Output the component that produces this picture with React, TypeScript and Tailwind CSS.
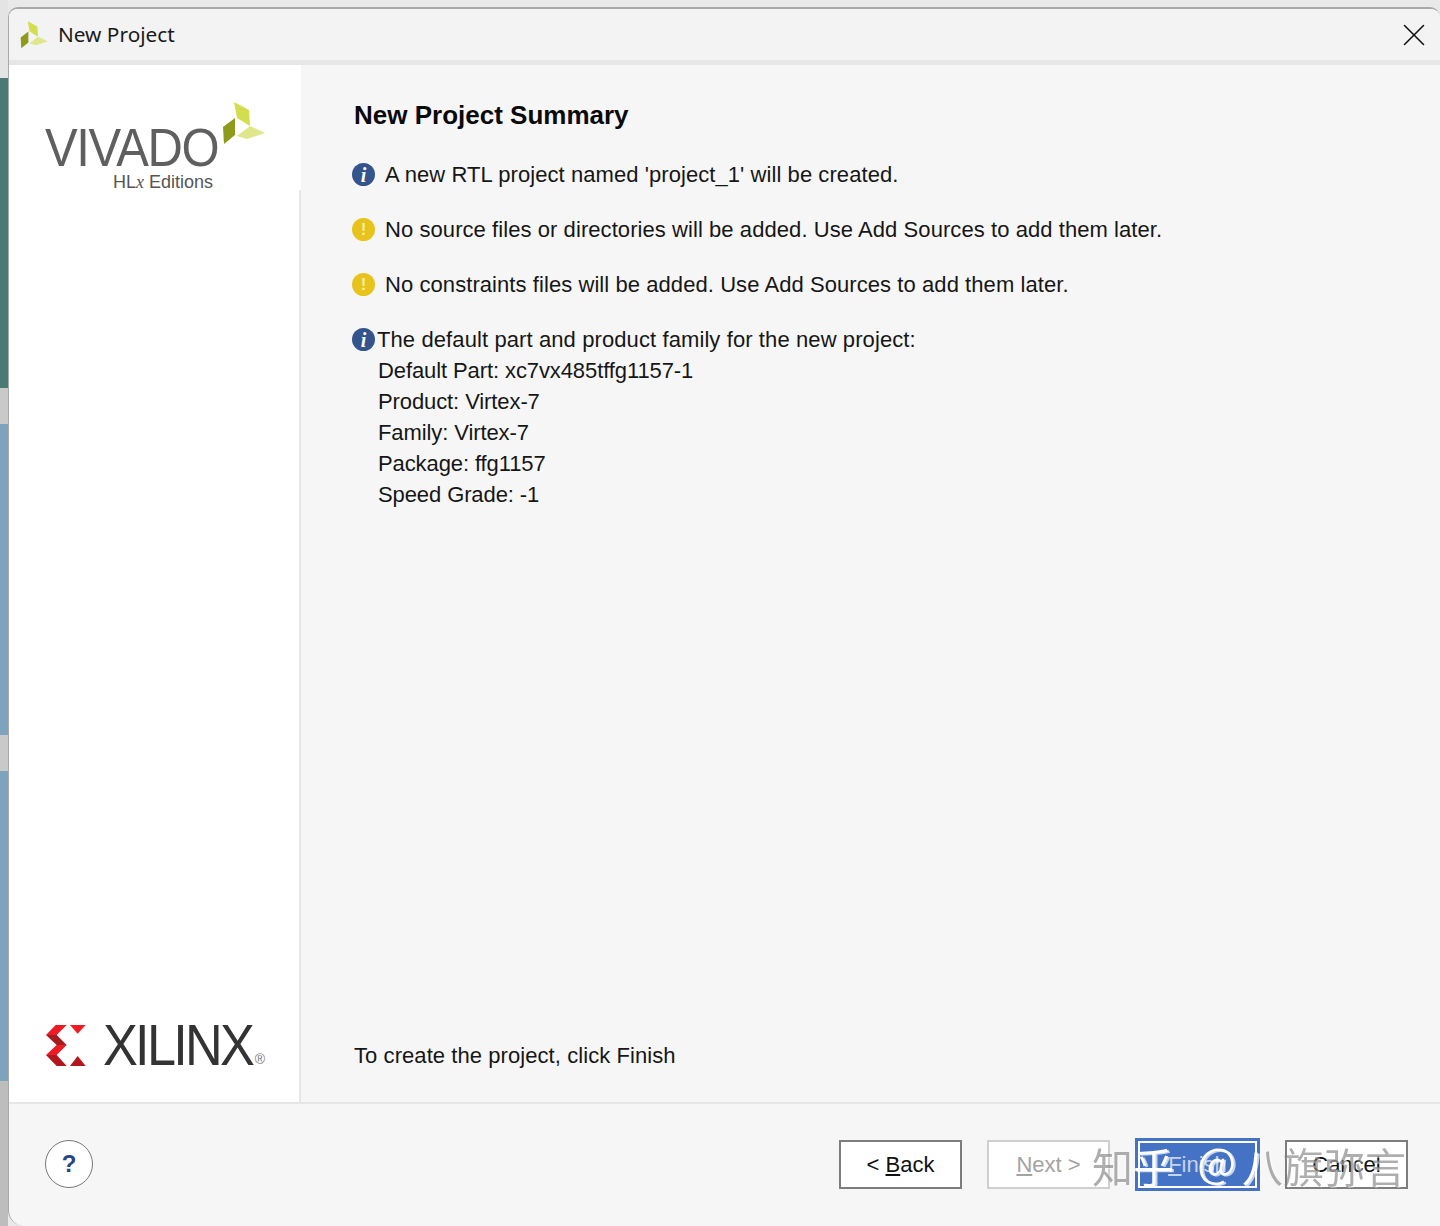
import { X } from 'lucide-react';

const FONT = "font-['Liberation_Sans',Arial,sans-serif]";

function InfoIcon() {
    return (
        <span className="flex h-[23px] w-[23px] shrink-0 items-center justify-center rounded-full bg-[#34548c] font-['Liberation_Serif',serif] text-[20px] font-bold italic leading-none text-white">
            i
        </span>
    );
}

function WarnIcon() {
    return (
        <span className="flex h-[23px] w-[23px] shrink-0 items-center justify-center rounded-full bg-[#e8c31c] text-[17px] font-bold leading-none text-[#f7ee9c]">
            !
        </span>
    );
}

function VivadoMark({ className }: { className: string }) {
    return (
        <svg viewBox="220 100 45 45" className={className}>
            <polygon points="232,102 247,110 248,126 235,118" fill="#d3de4f" />
            <polygon points="221,127 233,118 233,135 222,144" fill="#8d9a1c" />
            <polygon points="235,136 248,126 263,133 245,139" fill="#dfe78a" />
        </svg>
    );
}

function XilinxMark() {
    return (
        <svg viewBox="33 42 120 123" className="h-[41px] w-[40px] shrink-0">
            <polygon points="33,72 62,42 95,42 65,72" fill="#ed1c24" />
            <polygon points="33,72 65,72 95,102 65,102" fill="#a51c20" />
            <polygon points="65,102 95,102 65,132 33,132" fill="#ed1c24" />
            <polygon points="33,132 65,132 95,165 65,165" fill="#b3171d" />
            <polygon points="105,42 152,42 128,68" fill="#ed1c24" />
            <polygon points="128,135 152,165 105,165" fill="#b3171d" />
        </svg>
    );
}

function Message({ warn, children }: { warn?: boolean; children: string }) {
    return (
        <div className="flex h-[23px] items-center gap-[10px]">
            {warn ? <WarnIcon /> : <InfoIcon />}
            <span>{children}</span>
        </div>
    );
}

function DialogButton({ className, children }: { className: string; children: React.ReactNode }) {
    return (
        <div className={`flex h-[49px] w-[123px] items-center justify-center border-2 text-[22px] ${className}`}>
            {children}
        </div>
    );
}

export default function App() {
    return (
        <div className={`relative flex h-[1226px] w-[1440px] overflow-hidden bg-[#e9e9e9] text-[#111] ${FONT}`}>
            {/* Desktop showing behind the window */}
            <div className="flex w-[8px] shrink-0 flex-col bg-[#bdbdbd]">
                <div className="h-[78px] bg-[#e4e4e4]" />
                <div className="h-[310px] bg-[#4b7a74]" />
                <div className="h-[36px] bg-[#c9c9c9]" />
                <div className="h-[311px] bg-[#7da4bc]" />
                <div className="h-[36px] bg-[#c9c9c9]" />
                <div className="h-[310px] bg-[#7da4bc]" />
            </div>

            <div className="mt-[7px] flex flex-1 flex-col overflow-hidden rounded-t-[10px] rounded-bl-[16px] border-t-2 border-l border-[#a9a9a9] bg-[#f6f6f6]">
                {/* Title bar */}
                <div className="flex h-[56px] shrink-0 items-center justify-between border-b-[5px] border-[#e6e6e6] bg-[#f3f3f3] pr-[7px] pl-[11px]">
                    <div className="flex items-center gap-[9px]">
                        <VivadoMark className="h-[29px] w-[29px]" />
                        <span className="font-['Noto_Sans',sans-serif] text-[20.8px] leading-none text-[#1a1a1a]">New Project</span>
                    </div>
                    <X className="-my-2 h-[38px] w-[38px] text-[#111]" strokeWidth={1} />
                </div>

                <div className="flex min-h-0 flex-1">
                    {/* Brand column */}
                    <div className="flex w-[292px] shrink-0 flex-col justify-between border-r-2 border-[#e6e6e6] bg-white pb-[36px]">
                        <div className="relative -mr-[2px] flex h-[125px] items-start bg-white pt-[35px] pl-[36px]">
                            <div className="flex flex-col items-end">
                                <span className="mt-[20px] origin-left scale-x-[0.907] text-[54px] leading-[54px] tracking-[-1.5px] text-[#5f5f5f]">VIVADO</span>
                                <span className="mt-[-3px] mr-[23px] text-[18px] leading-[22px] text-[#555]">
                                    HL<span className="font-['Liberation_Serif',serif] italic">x</span> Editions
                                </span>
                            </div>
                            <VivadoMark className="-ml-[14px] h-[45px] w-[45px]" />
                        </div>
                        <div className="flex items-end pl-[37px]">
                            <XilinxMark />
                            <span className="ml-[17px] origin-left scale-x-[0.9] text-[58px] leading-[42px] tracking-[-3px] whitespace-nowrap text-[#333]">XILINX</span>
                            <span className="-ml-[14px] text-[14px] leading-[13px] text-[#777]">®</span>
                        </div>
                    </div>

                    {/* Summary */}
                    <div className="flex flex-1 flex-col justify-between pt-[35px] pb-[33px] pl-[51px] text-[22px] tracking-[0.07px] text-[#161616]">
                        <div>
                            <h1 className="ml-[2px] text-[26px] leading-[30px] font-bold tracking-normal text-[#0a0a0a]">New Project Summary</h1>
                            <div className="mt-[33px] flex flex-col gap-[32px]">
                                <Message>A new RTL project named 'project_1' will be created.</Message>
                                <Message warn>No source files or directories will be added. Use Add Sources to add them later.</Message>
                                <Message warn>No constraints files will be added. Use Add Sources to add them later.</Message>
                            </div>
                            <div className="mt-[32px] flex flex-col leading-[31px]">
                                <div className="flex h-[23px] items-center gap-[2px]">
                                    <InfoIcon />
                                    <span className="tracking-[0.1px]">The default part and product family for the new project:</span>
                                </div>
                                <div className="mt-[4px] ml-[26px] tracking-[-0.1px]">
                                    <div>Default Part: xc7vx485tffg1157-1</div>
                                    <div>Product: Virtex-7</div>
                                    <div>Family: Virtex-7</div>
                                    <div>Package: ffg1157</div>
                                    <div>Speed Grade: -1</div>
                                </div>
                            </div>
                        </div>
                        <div className="ml-[2px] leading-[26px]">To create the project, click Finish</div>
                    </div>
                </div>

                {/* Footer */}
                <div className="flex h-[124px] shrink-0 items-center justify-between border-t-2 border-[#e6e6e6] pr-[32px] pb-[2px] pl-[36px]">
                    <div className="flex h-[48px] w-[48px] items-center justify-center rounded-full border border-[#777] bg-white text-[24px] font-bold text-[#2b4684]">
                        ?
                    </div>
                    <div className="flex items-center gap-[25px]">
                        <DialogButton className="border-[#7d7d7d] bg-white text-[#111]">
                            <span>&lt; <u>B</u>ack</span>
                        </DialogButton>
                        <DialogButton className="border-[#cfcfcf] bg-white text-[#a3a3a3]">
                            <span><u>N</u>ext &gt;</span>
                        </DialogButton>
                        <div className="flex h-[53px] w-[125px] items-center justify-center bg-[#4472c4] text-[22px] text-[#c5d4ee] outline-2 -outline-offset-[5px] outline-white">
                            <span><u>F</u>inish</span>
                        </div>
                        <DialogButton className="border-[#7d7d7d] bg-white text-[#111]">Cancel</DialogButton>
                    </div>
                </div>
            </div>

            {/* Site watermark over the buttons */}
            <div className="absolute top-[1131px] left-[1092px] bg-[linear-gradient(90deg,rgba(130,130,130,0.65)_43px,#ffffff_43px,#ffffff_169px,rgba(130,130,130,0.65)_169px)] bg-clip-text font-['Noto_Sans_CJK_SC',sans-serif] text-[41px] leading-[58px] whitespace-nowrap text-transparent [word-spacing:14px] [filter:drop-shadow(2px_1px_0_rgba(255,255,255,0.7))]">
                知乎 <span className="mr-[6px] align-[5px]">@</span>八旗弥言
            </div>
        </div>
    );
}
